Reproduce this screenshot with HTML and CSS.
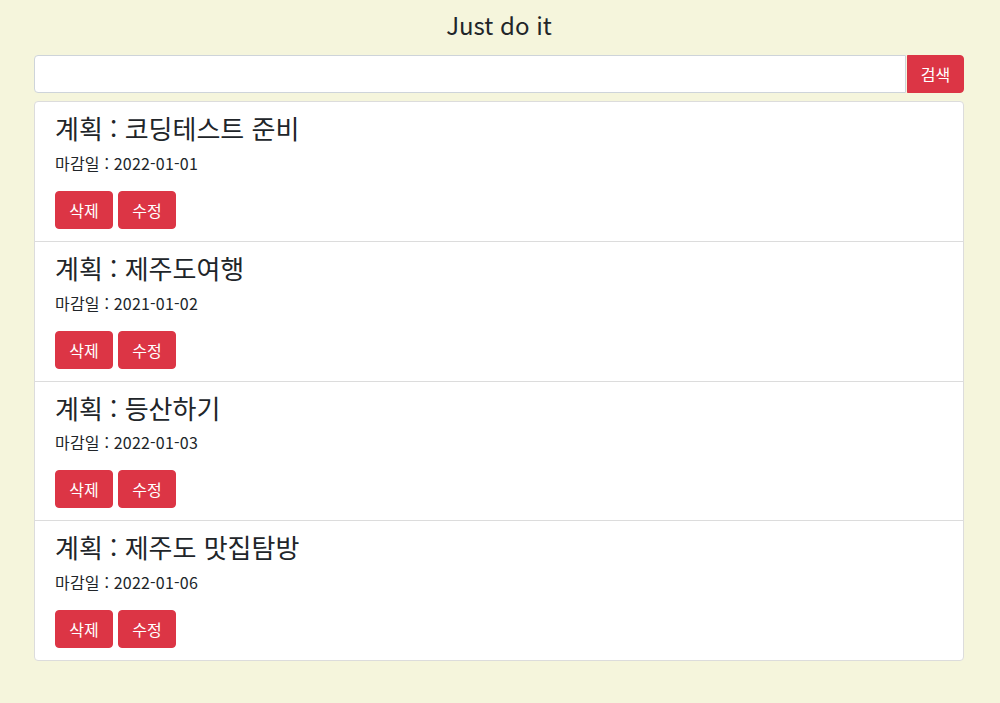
FILE: index.html
```html
<!DOCTYPE html>
<html lang="ko">
<head>
<meta charset="utf-8">
<title>Just do it</title>
<link rel="stylesheet" href="styles.css">
</head>
<body>
<div class="app">
  <h1 class="title">Just do it</h1>
  <form class="search">
    <input class="search-input" type="text">
    <button class="btn" type="button">검색</button>
  </form>
  <ul class="list">
    <li class="item">
      <h4 class="plan">계획 : 코딩테스트 준비</h4>
      <p class="due">마감일 : 2022-01-01</p>
      <div class="actions"><button class="btn">삭제</button><button class="btn">수정</button></div>
    </li>
    <li class="item">
      <h4 class="plan">계획 : 제주도여행</h4>
      <p class="due">마감일 : 2021-01-02</p>
      <div class="actions"><button class="btn">삭제</button><button class="btn">수정</button></div>
    </li>
    <li class="item">
      <h4 class="plan">계획 : 등산하기</h4>
      <p class="due">마감일 : 2022-01-03</p>
      <div class="actions"><button class="btn">삭제</button><button class="btn">수정</button></div>
    </li>
    <li class="item">
      <h4 class="plan">계획 : 제주도 맛집탐방</h4>
      <p class="due">마감일 : 2022-01-06</p>
      <div class="actions"><button class="btn">삭제</button><button class="btn">수정</button></div>
    </li>
  </ul>
</div>
</body>
</html>
```
FILE: styles.css
```css
* { box-sizing: border-box; }
html, body { margin: 0; padding: 0; }
body {
  background: #f5f5dc;
  color: #212529;
  font-family: "Noto Sans CJK KR", "Noto Sans", sans-serif;
  font-size: 16px;
  line-height: 1.5;
}
.app {
  width: 930px;
  margin: 0 36px 0 34px;
  padding-top: 10px;
}
.title {
  margin: 0 0 16px;
  text-align: center;
  font-size: 24px;
  font-weight: 400;
  line-height: 29px;
}
.search {
  display: flex;
  margin: 0 0 8px;
}
.search-input {
  flex: 1;
  height: 38px;
  border: 1px solid #ced4da;
  border-radius: 4px 0 0 4px;
  background: #fff;
  font: inherit;
  padding: 6px 12px;
  outline: none;
}
.btn {
  width: 58px;
  height: 38px;
  padding: 0;
  border: 1px solid #dc3545;
  background: #dc3545;
  color: #fff;
  font: inherit;
  font-size: 16px;
  line-height: 24px;
  border-radius: 4px;
  text-align: center;
  cursor: pointer;
}
.search .btn {
  width: 57px;
  border-radius: 0 4px 4px 0;
  margin-left: 1px;
}
.list {
  list-style: none;
  margin: 0;
  padding: 0;
  background: #fff;
  border: 1px solid #dcdcdc;
  border-radius: 4px;
}
.item {
  padding: 12px 20px;
  border-top: 1px solid #dcdcdc;
}
.item:first-child { border-top: 0; }
.plan {
  margin: 0 0 8px;
  font-size: 26px;
  font-weight: 400;
  line-height: 28.8px;
}
.due {
  margin: 0 0 16px;
  font-size: 16px;
  letter-spacing: 0.2px;
  line-height: 24px;
}
.actions {
  display: flex;
  gap: 5px;
}
```
